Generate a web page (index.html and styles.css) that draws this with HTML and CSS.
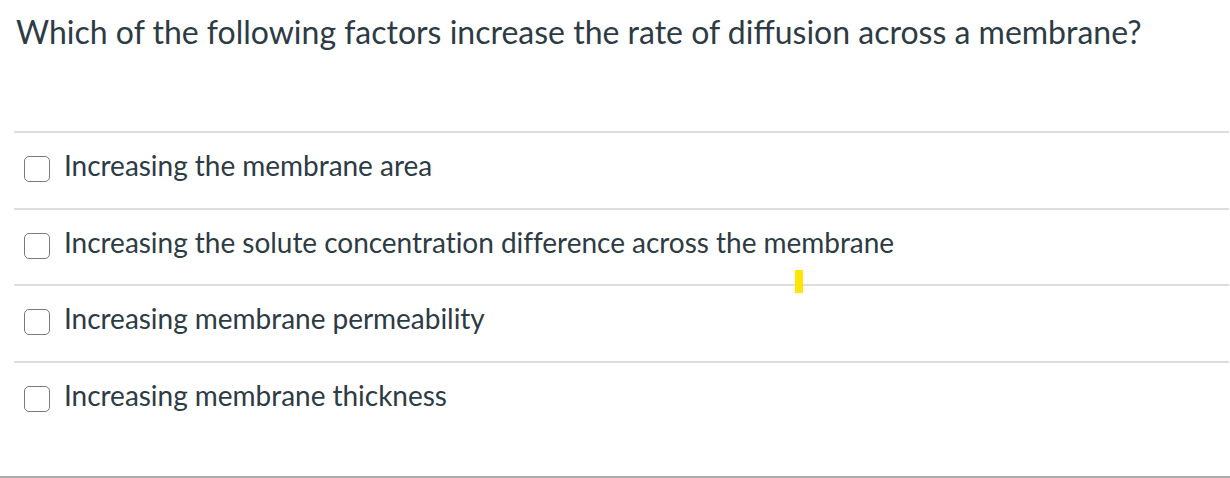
FILE: index.html
```html
<!DOCTYPE html>
<html lang="en">
<head>
<meta charset="utf-8">
<title>Quiz question</title>
<link rel="stylesheet" href="styles.css">
</head>
<body>
<div class="question">
  <p class="prompt">Which of the following factors increase the rate of diffusion across a membrane?</p>
  <ul class="answers">
    <li class="answer"><span class="box"></span><span class="label">Increasing the membrane area</span></li>
    <li class="answer"><span class="box"></span><span class="label">Increasing the solute concentration difference across the membrane</span></li>
    <li class="answer"><span class="box"></span><span class="label">Increasing membrane permeability</span></li>
    <li class="answer"><span class="box"></span><span class="label">Increasing membrane thickness</span></li>
  </ul>
  <span class="cursor"></span>
</div>
</body>
</html>
```
FILE: styles.css
```css
html, body {
  margin: 0;
  padding: 0;
  background: #ffffff;
}
body {
  font-family: Lato, "Open Sans", sans-serif;
  color: #2d3b45;
  width: 1230px;
  height: 478px;
  overflow: hidden;
}
.question {
  position: relative;
  height: 476px;
  border-bottom: 2px solid #aaaaaa;
}
.prompt {
  margin: 0;
  padding: 13px 0 0 16px;
  font-size: 32px;
  line-height: 38px;
  height: 131px;
  box-sizing: border-box;
}
.answers {
  list-style: none;
  margin: 0 1px 0 14px;
  padding: 0;
}
.answer {
  display: flex;
  align-items: flex-start;
  gap: 14px;
  border-top: 2px solid #dddddd;
  padding: 21px 0 25.67px 10px;
  font-size: 28px;
  line-height: 22px;
  letter-spacing: -0.03px;
}
.label {
  white-space: nowrap;
}
.box {
  width: 26px;
  height: 26px;
  box-sizing: border-box;
  border: 1.5px solid #7a7a7a;
  border-radius: 5px;
  flex: none;
  margin-top: 2px;
}
.cursor {
  position: absolute;
  left: 795px;
  top: 270px;
  width: 8px;
  height: 23px;
  background: #ffe600;
}
```
